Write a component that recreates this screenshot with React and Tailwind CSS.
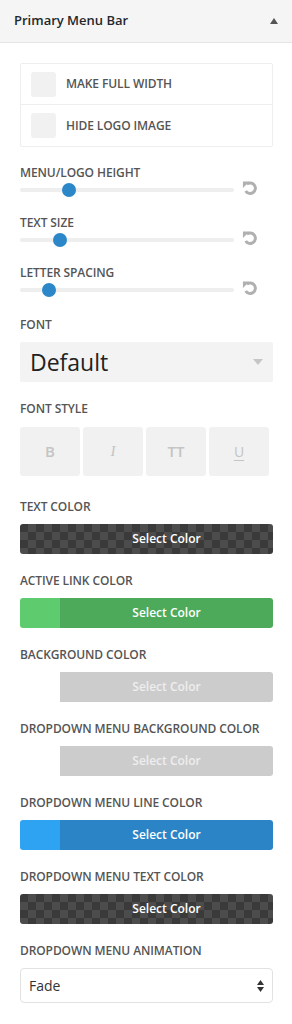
import React from 'react';

const font = { fontFamily: '"Open Sans", "Liberation Sans", sans-serif' };

function Label({ children }) {
  return (
    <div className="text-[12px] leading-[14px] font-semibold text-[#555] uppercase tracking-[-0.1px]">
      {children}
    </div>
  );
}

function ResetIcon() {
  return (
    <svg width="16" height="16" viewBox="0 0 14 14" className="shrink-0">
      <path d="M4.2 3.6 A4.6 4.6 0 1 1 3.2 9.6" fill="none" stroke="#b0b0b0" strokeWidth="2.6" strokeLinecap="butt" />
      <path d="M0.8 1.4 L6.6 1.4 L0.8 7 Z" fill="#b0b0b0" />
    </svg>
  );
}

function Slider({ label, pos }) {
  return (
    <div className="mt-[19px] first:mt-0">
      <Label>{label}</Label>
      <div className="flex items-center mt-[3px] h-[14px]">
        <div className="relative w-[214px] h-[4px] rounded-full bg-[#eeeeee]">
          <div
            className="absolute top-1/2 -translate-y-1/2 -translate-x-1/2 w-[14px] h-[14px] rounded-full bg-[#2b87c8]"
            style={{ left: pos }}
          />
        </div>
        <div className="ml-[8px] -mt-[4px]">
          <ResetIcon />
        </div>
      </div>
    </div>
  );
}

function ColorBar({ label, kind }) {
  let bar;
  if (kind === 'dark') {
    bar = (
      <div className="h-[30px] rounded-[3px] bg-[#3c3c3c] bg-[image:repeating-conic-gradient(#4c4c4c_0_25%,#3a3a3a_0_50%)] bg-[length:16px_16px] flex items-center justify-center pl-[40px]">
        <span className="text-white text-[12px] font-semibold">Select Color</span>
      </div>
    );
  } else if (kind === 'green') {
    bar = (
      <div className="h-[30px] rounded-[3px] overflow-hidden flex">
        <div className="w-[40px] bg-[#5ecb6f]" />
        <div className="flex-1 bg-[#4caa5a] flex items-center justify-center">
          <span className="text-white text-[12px] font-semibold">Select Color</span>
        </div>
      </div>
    );
  } else if (kind === 'blue') {
    bar = (
      <div className="h-[30px] rounded-[3px] overflow-hidden flex">
        <div className="w-[40px] bg-[#2ea3f2]" />
        <div className="flex-1 bg-[#2b84c6] flex items-center justify-center">
          <span className="text-white text-[12px] font-semibold">Select Color</span>
        </div>
      </div>
    );
  } else {
    bar = (
      <div className="h-[30px] flex">
        <div className="w-[40px] bg-white" />
        <div className="flex-1 rounded-r-[3px] bg-[#cccccc] flex items-center justify-center">
          <span className="text-[#eeeeee] text-[12px] font-semibold">Select Color</span>
        </div>
      </div>
    );
  }
  return (
    <div className="mt-[20px]">
      <Label>{label}</Label>
      <div className="mt-[10px]">{bar}</div>
    </div>
  );
}

export default function App() {
  return (
    <div className="w-[292px] min-h-[1024px] bg-white" style={font}>
      {/* header */}
      <div className="h-[43px] bg-[#f5f5f5] border-b border-[#e5e5e5] flex items-center justify-between pl-[14px] pr-[14px]">
        <span className="text-[13px] font-semibold text-[#23282d]">Primary Menu Bar</span>
        <svg width="8" height="6" viewBox="0 0 8 6">
          <path d="M0 6 L4 0 L8 6 Z" fill="#555" />
        </svg>
      </div>

      <div className="pl-[20px] pr-[19px] pt-[20px]">
        {/* checkboxes */}
        <div className="border border-[#eeeeee] rounded-[2px]">
          {['Make Full Width', 'Hide Logo Image'].map((t, i) => (
            <div
              key={t}
              className={`h-[41px] flex items-center pl-[10px] ${i === 0 ? 'border-b border-[#eeeeee]' : ''}`}
            >
              <div className="w-[25px] h-[25px] rounded-[3px] bg-[#f1f1f1]" />
              <span className="ml-[10px] text-[12px] font-semibold text-[#555] uppercase tracking-[-0.1px]">{t}</span>
            </div>
          ))}
        </div>

        {/* sliders */}
        <div className="mt-[19px]">
          <Slider label="Menu/Logo Height" pos="49px" />
          <Slider label="Text Size" pos="40px" />
          <Slider label="Letter Spacing" pos="29px" />
        </div>

        {/* font */}
        <div className="mt-[21px]">
          <Label>Font</Label>
          <div className="mt-[10px] h-[40px] bg-[#f3f3f3] rounded-[2px] flex items-center justify-between pl-[10px] pr-[10px]">
            <span className="text-[23px] text-[#222] leading-none">Default</span>
            <svg width="10" height="6" viewBox="0 0 10 6">
              <path d="M0 0 L10 0 L5 6 Z" fill="#c6c6c6" />
            </svg>
          </div>
        </div>

        {/* font style */}
        <div className="mt-[20px]">
          <Label>Font Style</Label>
          <div className="mt-[11px] flex gap-[3px] w-[249px]">
            <div className="flex-1 h-[49px] rounded-[3px] bg-[#f1f1f1] flex items-center justify-center text-[15px] font-semibold text-[#c4c4c4]">
              B
            </div>
            <div className="flex-1 h-[49px] rounded-[3px] bg-[#f1f1f1] flex items-center justify-center text-[15px] italic text-[#c4c4c4]" style={{ fontFamily: '"Liberation Serif", serif' }}>
              I
            </div>
            <div className="flex-1 h-[49px] rounded-[3px] bg-[#f1f1f1] flex items-center justify-center text-[15px] font-semibold text-[#c4c4c4]">
              TT
            </div>
            <div className="flex-1 h-[49px] rounded-[3px] bg-[#f1f1f1] flex items-center justify-center text-[14px] text-[#c4c4c4] underline underline-offset-[3px]">
              U
            </div>
          </div>
        </div>

        {/* colors */}
        <div className="pt-[4px]">
          <ColorBar label="Text Color" kind="dark" />
          <ColorBar label="Active Link Color" kind="green" />
          <ColorBar label="Background Color" kind="white" />
          <ColorBar label="Dropdown Menu Background Color" kind="white" />
          <ColorBar label="Dropdown Menu Line Color" kind="blue" />
          <ColorBar label="Dropdown Menu Text Color" kind="dark" />
        </div>

        {/* animation */}
        <div className="mt-[20px]">
          <Label>Dropdown Menu Animation</Label>
          <div className="mt-[10px] h-[35px] border border-[#e2e2e2] rounded-[4px] flex items-center justify-between pl-[8px] pr-[8px]">
            <span className="text-[14px] text-[#333]">Fade</span>
            <svg width="7" height="12" viewBox="0 0 7 12">
              <path d="M0 5 L3.5 0 L7 5 Z" fill="#333" />
              <path d="M0 7 L3.5 12 L7 7 Z" fill="#333" />
            </svg>
          </div>
        </div>
      </div>
    </div>
  );
}
